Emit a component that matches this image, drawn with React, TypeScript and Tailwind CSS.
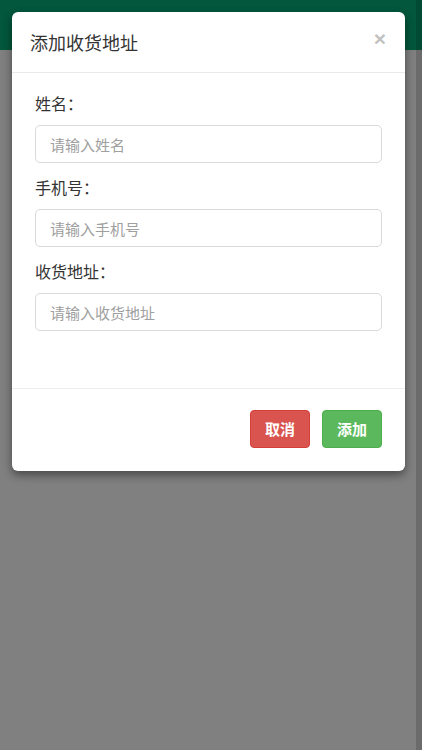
import React, { useState } from 'react';

const fields = [
  { label: '姓名：', placeholder: '请输入姓名', key: 'name' },
  { label: '手机号：', placeholder: '请输入手机号', key: 'phone' },
  { label: '收货地址：', placeholder: '请输入收货地址', key: 'address' },
];

export default function App() {
  const [form, setForm] = useState<Record<string, string>>({ name: '', phone: '', address: '' });

  return (
    <div
      className="relative h-[750px] w-[422px] overflow-hidden bg-[#808080]"
      style={{ fontFamily: '"Noto Sans CJK SC", "Noto Sans", sans-serif' }}
    >
      {/* page behind the backdrop */}
      <div className="flex h-full">
        <div className="flex flex-1 flex-col">
          <div className="h-[50px] bg-[#02573c]" />
          <div className="flex-1 bg-[#808080]" />
        </div>
        <div className="flex w-[6px] flex-col">
          <div className="h-[50px] bg-[#024a33]" />
          <div className="flex-1 bg-[#6b6b6b]" />
        </div>
      </div>

      {/* modal */}
      <div className="absolute left-[12px] top-[12px] w-[393px] rounded-[6px] bg-white shadow-[0_4px_10px_rgba(0,0,0,0.45)]">
        <div className="flex h-[61px] items-center justify-between border-b border-[#e9e9e9] pl-[18px] pr-[18px]">
          <h4 className="text-[18px] leading-6 text-[#333]">添加收货地址</h4>
          <button
            className="mr-[1px] mt-[-7px] text-[21px] font-bold leading-none text-[#c2c2c2]"
            style={{ fontFamily: '"Liberation Sans", Arial, sans-serif' }}
          >
            ×
          </button>
        </div>

        <div className="px-[23px] pb-[57px] pt-[18px]">
          <div className="flex flex-col gap-[12px]">
            {fields.map((f) => (
              <div key={f.key} className="flex flex-col">
                <label className="mb-[10px] h-6 text-[16px] leading-6 text-[#333]">{f.label}</label>
                <input
                  value={form[f.key]}
                  onChange={(e) => setForm((prev) => ({ ...prev, [f.key]: e.target.value }))}
                  placeholder={f.placeholder}
                  className="h-[38px] rounded-[5px] border border-[#d9d9d9] px-[14px] text-[15px] text-[#555] outline-none placeholder:text-[#a0a0a0]"
                  style={{ fontFamily: '"Noto Sans CJK SC", sans-serif' }}
                />
              </div>
            ))}
          </div>
        </div>

        <div className="flex justify-end gap-[12px] border-t border-[#eeeeee] px-[23px] pb-[23px] pt-[21px]">
          <button className="h-[38px] w-[60px] rounded-[4px] border border-[#d43f3a] bg-[#d9534f] text-[15px] font-bold text-white">
            取消
          </button>
          <button className="h-[38px] w-[60px] rounded-[4px] border border-[#4cae4c] bg-[#5cb85c] text-[15px] font-bold text-white">
            添加
          </button>
        </div>
      </div>
    </div>
  );
}
